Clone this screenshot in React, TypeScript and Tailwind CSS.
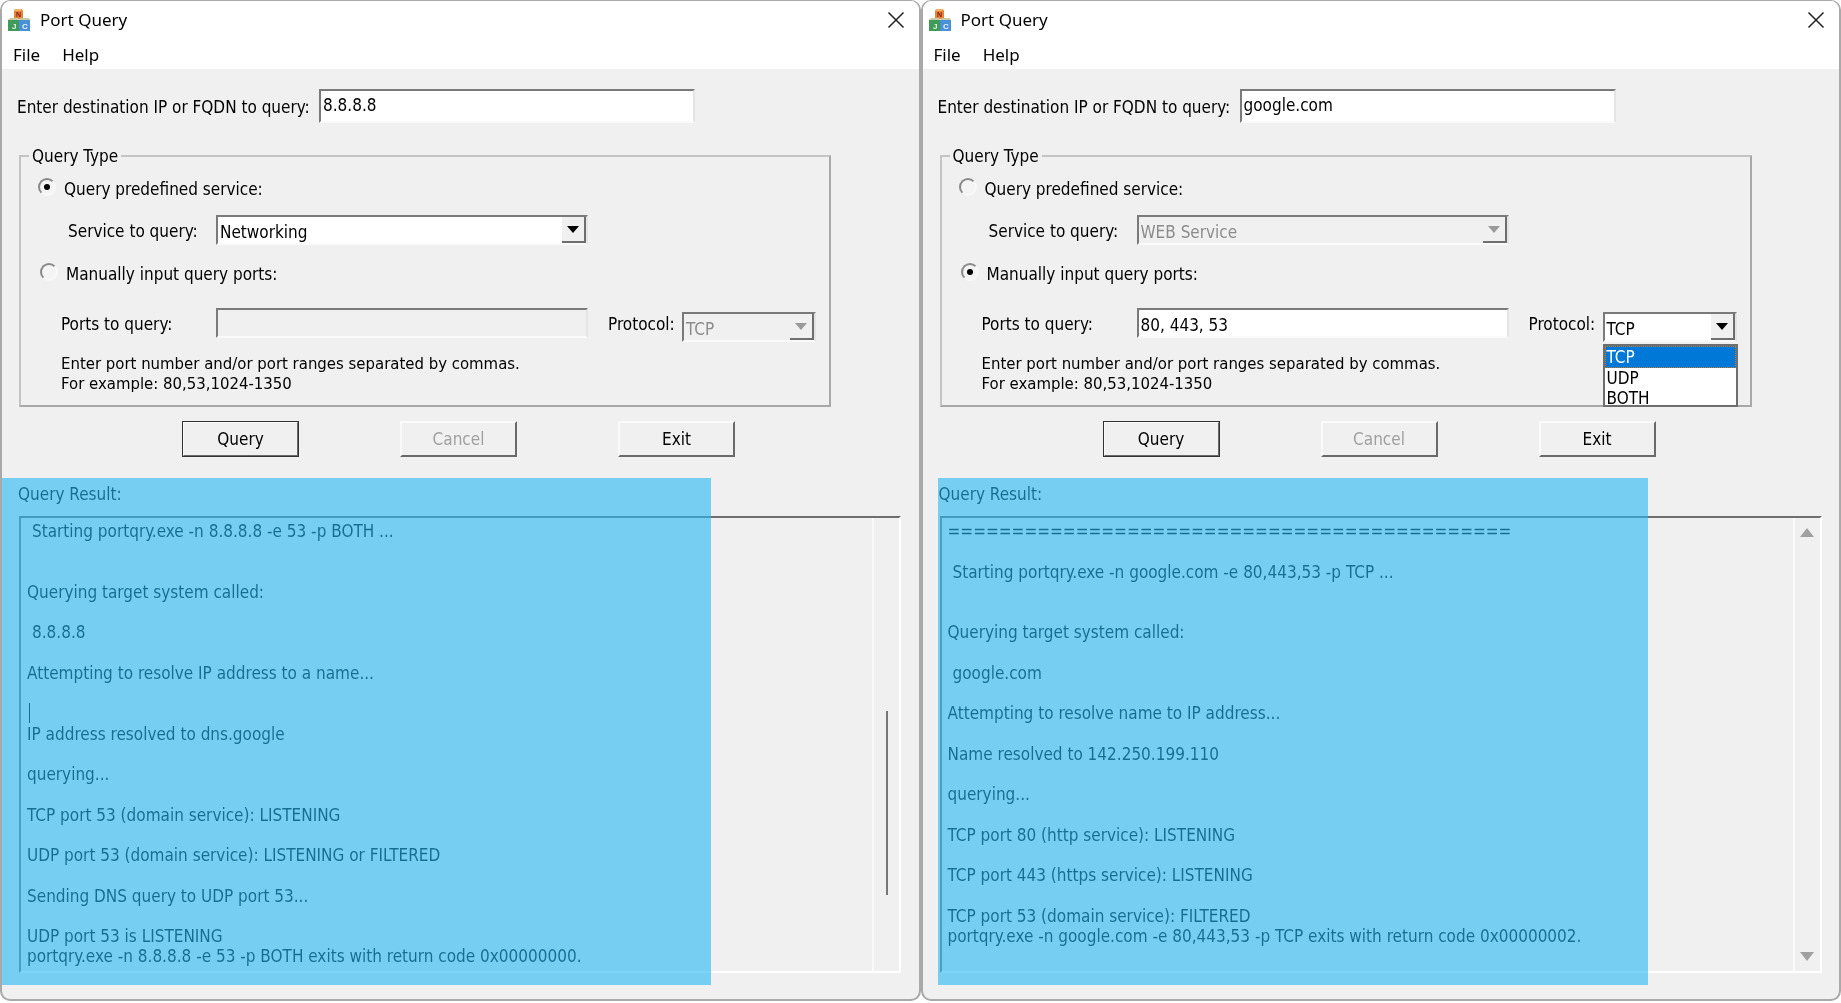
import React from "react";

const Sunken = "border-2 border-t-[#7a7a7a] border-l-[#7a7a7a] border-r-[#e4e4e4] border-b-[#fafafa]";
const UiFont = "font-['Noto_Sans',sans-serif]";

const AppIcon = () => (
  <svg width="24" height="26" viewBox="0 0 24 26">
    <path d="M8 2h7l1 2v8H7V4z" fill="#e8833a" />
    <path d="M8 2h7l-1 2H8z" fill="#f6b26b" />
    <rect x="1" y="13" width="11" height="11" fill="#3f9b57" />
    <rect x="12" y="13" width="11" height="11" fill="#4a90d9" />
    <path d="M1 13l2-2h8l1 2zM12 13l2-2h8l1 2z" fill="#c9c9a8" />
    <text x="9" y="10" fontSize="7" fontWeight="700" fill="#7a1f10" fontFamily="Liberation Sans, sans-serif">N</text>
    <text x="5" y="22" fontSize="8" fontWeight="700" fill="#eaf6ea" fontFamily="Liberation Sans, sans-serif">J</text>
    <text x="15" y="22" fontSize="8" fontWeight="700" fill="#eaf2fb" fontFamily="Liberation Sans, sans-serif">C</text>
  </svg>
);

const Radio = ({ checked }: { checked?: boolean }) => (
  <span className="-mt-[2px] flex h-[18px] w-[18px] shrink-0 items-center justify-center rounded-full border-2 border-t-[#8a8a8a] border-l-[#8a8a8a] border-r-[#f8f8f8] border-b-[#f8f8f8] bg-[#f4f4f4]">
    {checked && <span className="h-[6px] w-[6px] rounded-full bg-black" />}
  </span>
);

const Combo = ({ value, width, disabled, push }: { value: string; width: string; disabled?: boolean; push?: boolean }) => (
  <div className={`flex h-[30px] items-center ${width} ${Sunken} ${push ? "mt-[8px]" : ""} ${disabled ? "bg-[#f0f0f0] text-[#8c8c8c]" : "bg-white text-black"}`}>
    <span className="flex-1 pl-[2px] pt-[3px]">{value}</span>
    <span className="flex h-[26px] w-[24px] items-center justify-center border-r-2 border-b-2 border-[#6e6e6e] bg-[#f0f0f0]">
      <svg width="12" height="7" viewBox="0 0 12 7">
        <path d="M0 0h12L6 7z" fill={disabled ? "#9a9a9a" : "#000"} />
      </svg>
    </span>
  </div>
);

const Btn = ({ label, primary, disabled }: { label: string; primary?: boolean; disabled?: boolean }) => (
  <button
    className={`h-[36px] w-[117px] border-2 border-t-[#fafafa] border-l-[#fafafa] border-r-[#6a6a6a] border-b-[#6a6a6a] bg-[#f0f0f0] ${
      primary ? "outline outline-1 -outline-offset-1 outline-[#333]" : ""
    } ${disabled ? "text-[#a0a0a0]" : "text-black"}`}
  >
    {label}
  </button>
);

type Line = { t?: string; indent?: boolean; caret?: boolean };

const leftLines: Line[] = [
  { t: "Starting portqry.exe -n 8.8.8.8 -e 53 -p BOTH ...", indent: true },
  {},
  {},
  { t: "Querying target system called:" },
  {},
  { t: "8.8.8.8", indent: true },
  {},
  { t: "Attempting to resolve IP address to a name..." },
  {},
  { caret: true },
  { t: "IP address resolved to dns.google" },
  {},
  { t: "querying..." },
  {},
  { t: "TCP port 53 (domain service): LISTENING" },
  {},
  { t: "UDP port 53 (domain service): LISTENING or FILTERED" },
  {},
  { t: "Sending DNS query to UDP port 53..." },
  {},
  { t: "UDP port 53 is LISTENING" },
  { t: "portqry.exe -n 8.8.8.8 -e 53 -p BOTH exits with return code 0x00000000." },
];

const rightLines: Line[] = [
  { t: "============================================" },
  {},
  { t: "Starting portqry.exe -n google.com -e 80,443,53 -p TCP ...", indent: true },
  {},
  {},
  { t: "Querying target system called:" },
  {},
  { t: "google.com", indent: true },
  {},
  { t: "Attempting to resolve name to IP address..." },
  {},
  { t: "Name resolved to 142.250.199.110" },
  {},
  { t: "querying..." },
  {},
  { t: "TCP port 80 (http service): LISTENING" },
  {},
  { t: "TCP port 443 (https service): LISTENING" },
  {},
  { t: "TCP port 53 (domain service): FILTERED" },
  { t: "portqry.exe -n google.com -e 80,443,53 -p TCP exits with return code 0x00000002." },
];

const Window = ({
  ip,
  predefined,
  service,
  ports,
  lines,
  arrows,
  overlay,
  open,
}: {
  ip: string;
  predefined: boolean;
  service: string;
  ports: string;
  lines: Line[];
  arrows: boolean;
  overlay: string;
  open?: boolean;
}) => (
  <div className="relative flex h-[1001px] w-[920px] flex-1 flex-col overflow-hidden rounded-[10px] border-2 border-t border-[#a9a9a9] bg-[#f0f0f0] text-[17px] leading-[20px] text-black">
    <div className="flex h-[38px] shrink-0 items-center bg-white pl-[5px] pr-[14px]">
      <AppIcon />
      <span className={`ml-[9px] flex-1 text-[17px] ${UiFont}`}>Port Query</span>
      <svg width="18" height="18" viewBox="0 0 18 18" stroke="#222" strokeWidth="1.5">
        <path d="M1.5 1.5l15 15M16.5 1.5l-15 15" />
      </svg>
    </div>
    <div className={`flex h-[30px] shrink-0 items-center gap-[22px] bg-white pb-[1px] pl-[11px] pt-[2px] text-[17px] ${UiFont}`}>
      <span>File</span>
      <span>Help</span>
    </div>

    <div className="flex flex-col pl-[15px]">
      <div className="mt-[20px] flex h-[34px] items-center">
        <span className="w-[302px] pt-[2px]">Enter destination IP or FQDN to query:</span>
        <div className={`flex h-[34px] w-[376px] items-start bg-white pl-[2px] pt-[4px] ${Sunken}`}>{ip}</div>
      </div>

      <div className="relative ml-[2px] mt-[32px] flex h-[252px] w-[812px] flex-col border-2 border-[#c4c4c4] border-b-[#a8a8a8] border-r-[#a8a8a8]">
        <span className="absolute -top-[11px] left-[8px] bg-[#f0f0f0] px-[3px]">Query Type</span>
        <div className="ml-[17px] mt-[19px] flex h-[24px] items-center gap-[8px]">
          <Radio checked={predefined} />
          <span className="pt-[2px]">Query predefined service:</span>
        </div>
        <div className="ml-[47px] mt-[14px] flex h-[32px] items-center">
          <span className="w-[148px] pt-[1px]">Service to query:</span>
          <Combo value={service} width="w-[372px]" disabled={!predefined} />
        </div>
        <div className="ml-[19px] mt-[15px] flex h-[24px] items-center gap-[8px]">
          <Radio checked={!predefined} />
          <span className="pt-[2px]">Manually input query ports:</span>
        </div>
        <div className="ml-[40px] mt-[21px] flex h-[34px] items-center">
          <span className="w-[155px] pt-[2px]">Ports to query:</span>
          <div className={`flex h-[30px] w-[372px] items-center pl-[2px] pt-[3px] ${Sunken} ${predefined ? "" : "bg-white"}`}>{ports}</div>
          <span className="ml-[20px] w-[74px] pt-[2px]">Protocol:</span>
          <Combo value="TCP" width="w-[134px]" disabled={!open} push />
        </div>
        <div className="ml-[40px] mt-[14px] flex flex-col text-[16.6px]">
          <span>Enter port number and/or port ranges separated by commas.</span>
          <span>For example: 80,53,1024-1350</span>
        </div>
        {open && (
          <div className="absolute left-[661px] top-[187px] flex h-[63px] w-[135px] flex-col border-2 border-[#6e6e6e] bg-white leading-[20px]">
            <span className="h-[22px] border border-dotted border-[#c97a20] bg-[#0078d7] pl-[1px] text-white">TCP</span>
            <span className="h-[20px] pl-[2px]">UDP</span>
            <span className="h-[20px] pl-[2px]">BOTH</span>
          </div>
        )}
      </div>

      <div className="ml-[165px] mt-[14px] flex h-[36px] gap-[101px]">
        <Btn label="Query" primary />
        <Btn label="Cancel" disabled />
        <Btn label="Exit" />
      </div>

      <span className="mt-[27px] h-[20px] pl-[1px]">Query Result:</span>
    </div>

    <div className="ml-[17px] mt-[12px] flex h-[457px] w-[882px] border-2 border-t-[#6e6e6e] border-l-[#7a7a7a] border-r-white border-b-white">
      <div className="flex-1 overflow-hidden pl-[6px] pt-[3px] leading-[20.25px]">
        {lines.map((l, i) => (
          <div key={i} className={`h-[20.25px] whitespace-nowrap ${l.indent ? "pl-[5px]" : ""}`}>
            {l.caret ? <div className="ml-[2px] h-[20px] w-[1px] bg-black" /> : l.t}
          </div>
        ))}
      </div>
      <div className="flex w-[27px] flex-col items-center justify-between border-l-2 border-[#fafafa] py-[10px]">
        {arrows ? (
          <>
            <svg width="14" height="9" viewBox="0 0 14 9"><path d="M7 0l7 9H0z" fill="#a0a0a0" /></svg>
            <svg width="14" height="9" viewBox="0 0 14 9"><path d="M0 0h14L7 9z" fill="#a0a0a0" /></svg>
          </>
        ) : (
          <div className="mt-[183px] h-[184px] w-[2px] bg-[#777]" />
        )}
      </div>
    </div>

    <div className={`absolute top-[477px] h-[507px] bg-[#25b7f3]/60 ${overlay}`} />
  </div>
);

export default function App() {
  return (
    <div className="flex h-[1003px] w-[1841px] overflow-hidden bg-white font-['DejaVu_Sans_Condensed','DejaVu_Sans',sans-serif] [font-stretch:condensed] blur-[0.35px]">
      <Window
        ip="8.8.8.8"
        predefined
        service="Networking"
        ports=""
        lines={leftLines}
        arrows={false}
        overlay="-left-[2px] w-[711px]"
      />
      <Window
        ip="google.com"
        predefined={false}
        service="WEB Service"
        ports="80, 443, 53"
        lines={rightLines}
        arrows
        overlay="left-[15px] w-[710px]"
        open
      />
    </div>
  );
}
